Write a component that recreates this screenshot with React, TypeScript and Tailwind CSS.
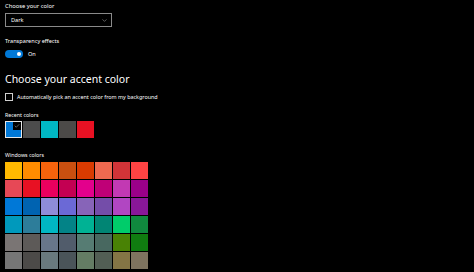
import { Check, ChevronDown } from "lucide-react";

const recent = ["#0078D7", "#4C4C4C", "#00B7C3", "#4C4A48", "#E81123"];

const windowsColors = [
	["#FFB900", "#FF8C00", "#F7630C", "#CA5010", "#DA3B01", "#EF6950", "#D13438", "#FF4343"],
	["#E74856", "#E81123", "#EA005E", "#C30052", "#E3008C", "#BF0077", "#C239B3", "#9A0089"],
	["#0078D7", "#0063B1", "#8E8CD8", "#6B69D6", "#8764B8", "#744DA9", "#B146C2", "#881798"],
	["#0099BC", "#2D7D9A", "#00B7C3", "#038387", "#00B294", "#018574", "#00CC6A", "#10893E"],
	["#7A7574", "#5D5A58", "#68768A", "#515C6B", "#567C73", "#486860", "#498205", "#107C10"],
	["#767676", "#4C4A48", "#69797E", "#4A5459", "#647C64", "#525E54", "#847545", "#7E735F"],
];

export default function App() {
	return (
		<div
			className="w-[474px] h-[272px] bg-black text-white overflow-hidden px-[5px]"
			style={{ fontFamily: '"Noto Sans", "Open Sans", sans-serif' }}
		>
			<div className="h-[13px] pt-[2px] text-[5.8px] leading-[9px]">Choose your color</div>
			<div className="w-[107px] h-[14px] border border-[#8a8a8a] flex items-center justify-between pl-[5px] pr-[3px] text-[5.6px]">
				<span>Dark</span>
				<ChevronDown size={7} strokeWidth={1.5} className="text-[#cfcfcf]" />
			</div>

			<div className="mt-[10px] h-[12px] text-[5.6px] leading-[9px]">Transparency effects</div>
			<div className="flex items-center gap-[5px] h-[8px] mt-[1px]">
				<div className="w-[18px] h-[8px] rounded-full bg-[#0078D7] flex items-center justify-end pr-[2px]">
					<div className="w-[4px] h-[4px] rounded-full bg-white" />
				</div>
				<span className="text-[5.6px] leading-[8px]">On</span>
			</div>

			<div className="mt-[15px] h-[14px] text-[10.5px] leading-[13px]">Choose your accent color</div>
			<div className="mt-[6px] flex items-center gap-[4px] h-[8px]">
				<div className="w-[8px] h-[8px] border border-[#d0d0d0]" />
				<span className="text-[5.4px] leading-[8px]">Automatically pick an accent color from my background</span>
			</div>

			<div className="mt-[10px] h-[9px] text-[5.3px] leading-[9px]">Recent colors</div>
			<div className="mt-[1px] flex gap-[1px]">
				{recent.map((c, i) => (
					<div
						key={i}
						className={
							i === 0
								? "relative w-[17px] h-[17px] border border-[#e6e6e6]"
								: "w-[17px] h-[17px]"
						}
						style={{ backgroundColor: c }}
					>
						{i === 0 && (
							<div className="absolute top-0 right-0 w-[8px] h-[8px] bg-black flex items-center justify-center">
								<Check size={6} strokeWidth={2} className="text-[#bdbdbd]" />
							</div>
						)}
					</div>
				))}
			</div>

			<div className="mt-[13px] h-[11px] text-[5.3px] leading-[9px]">Windows colors</div>
			<div className="grid grid-cols-[repeat(8,17px)] gap-[1px]">
				{windowsColors.flat().map((c, i) => (
					<div key={i} className="w-[17px] h-[17px]" style={{ backgroundColor: c }} />
				))}
			</div>
		</div>
	);
}
